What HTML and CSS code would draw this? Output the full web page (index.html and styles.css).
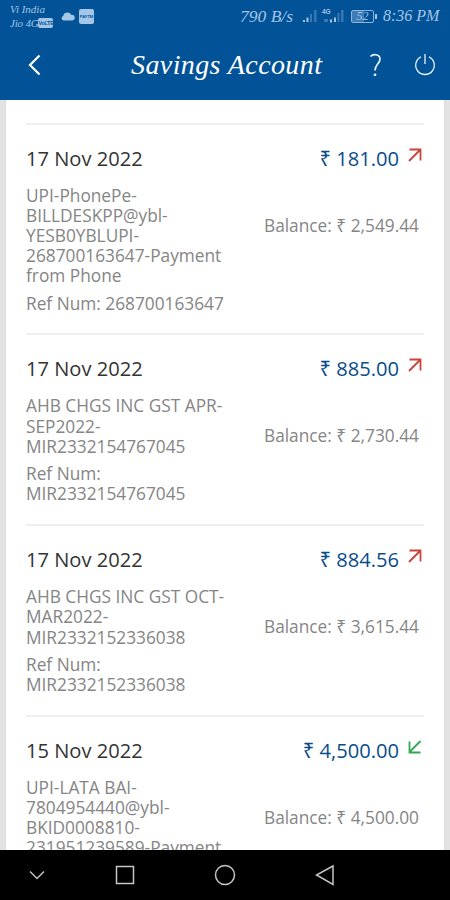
FILE: index.html
```html
<!DOCTYPE html>
<html lang="en">
<head>
<meta charset="utf-8">
<title>Savings Account</title>
<link rel="stylesheet" href="styles.css">
</head>
<body>
<div class="screen">
  <header class="top">
    <div class="status">
      <div class="carriers">
        <div class="carrier">Vi India</div>
        <div class="carrier second">Jio 4G<span class="volte">VoLTE</span></div>
      </div>
      <svg class="cloud" width="14" height="9" viewBox="0 0 14 9"><path d="M2.500 8.500A2.300 2.300 0 0 1 2.300 4A4.200 4.200 0 0 1 10.200 2.800A2.900 2.900 0 0 1 11.500 8.500Z"/></svg>
      <span class="paytm">PAYTM</span>
      <span class="speed">790 B/s</span>
      <svg class="signals" width="44" height="18" viewBox="0 0 44 18">
        <g class="on"><rect x="1" y="13" width="2" height="2"/><rect x="4.500" y="10.500" width="2" height="4.500"/><rect x="28" y="12.500" width="2" height="3"/><rect x="32" y="10.500" width="2" height="4.500"/></g>
        <g class="off"><rect x="8" y="7" width="2" height="8"/><rect x="12" y="3" width="2.500" height="12"/><rect x="22" y="12" width="4" height="3"/><rect x="35.500" y="6" width="2" height="9"/><rect x="39" y="3" width="2.500" height="12"/></g>
        <text x="20" y="7">4G</text>
      </svg>
      <span class="battery">52</span>
      <span class="clock">8:36 PM</span>
    </div>
    <div class="bar">
      <svg class="back" width="14" height="22" viewBox="0 0 14 22"><path d="M11.500 1.500L2 11L11.500 20.500"/></svg>
      <h1>Savings Account</h1>
      <svg class="help" width="14" height="24" viewBox="0 0 14 24"><path d="M1.500 3.500C4 .6 11 .8 11 6.300C11 10.500 6 11.500 6 17.500"/><circle cx="6" cy="21.800" r="1.400"/></svg>
      <svg class="power" width="22" height="24" viewBox="0 0 22 24"><path d="M11 1V11M7 3.800A9.300 9.300 0 1 0 15 3.800"/></svg>
    </div>
  </header>
  <main class="page">
    <section class="list">
      <article class="txn">
        <div class="head"><span class="date">17 Nov 2022</span><span class="amount">₹ 181.00</span><svg class="arrow debit" viewBox="0 0 14 14"><path d="M1 13L12.500 1.500M1.500 1.500H12.500V12.500"/></svg></div>
        <div class="body"><div class="details"><p>UPI-PhonePe-<br>BILLDESKPP@ybl-<br>YESB0YBLUPI-<br>268700163647-Payment<br>from Phone</p><p>Ref Num: 268700163647</p></div><div class="balance">Balance: <span class="sum">₹ 2,549.44</span></div></div>
      </article>
      <article class="txn">
        <div class="head"><span class="date">17 Nov 2022</span><span class="amount">₹ 885.00</span><svg class="arrow debit" viewBox="0 0 14 14"><path d="M1 13L12.500 1.500M1.500 1.500H12.500V12.500"/></svg></div>
        <div class="body"><div class="details"><p>AHB CHGS INC GST APR-<br>SEP2022-<br>MIR2332154767045</p><p>Ref Num:<br>MIR2332154767045</p></div><div class="balance">Balance: <span class="sum">₹ 2,730.44</span></div></div>
      </article>
      <article class="txn">
        <div class="head"><span class="date">17 Nov 2022</span><span class="amount">₹ 884.56</span><svg class="arrow debit" viewBox="0 0 14 14"><path d="M1 13L12.500 1.500M1.500 1.500H12.500V12.500"/></svg></div>
        <div class="body"><div class="details"><p>AHB CHGS INC GST OCT-<br>MAR2022-<br>MIR2332152336038</p><p>Ref Num:<br>MIR2332152336038</p></div><div class="balance">Balance: <span class="sum">₹ 3,615.44</span></div></div>
      </article>
      <article class="txn">
        <div class="head"><span class="date">15 Nov 2022</span><span class="amount">₹ 4,500.00</span><svg class="arrow credit" viewBox="0 0 14 14"><path d="M12.500 1L1.500 12M1.500 1.500V12.500H12.500"/></svg></div>
        <div class="body"><div class="details"><p>UPI-LATA BAI-<br>7804954440@ybl-<br>BKID0008810-<br>231951239589-Payment</p></div><div class="balance">Balance: <span class="sum">₹ 4,500.00</span></div></div>
      </article>
    </section>
  </main>
  <nav class="nav">
    <svg class="hide" width="50" height="24" viewBox="0 0 50 24"><path d="M18 8.500L25 15.500L32 8.500"/></svg>
    <svg width="50" height="24" viewBox="0 0 50 24"><rect x="16.500" y="3.500" width="17" height="17"/></svg>
    <svg width="50" height="24" viewBox="0 0 50 24"><circle cx="25" cy="12" r="9.500"/></svg>
    <svg width="50" height="24" viewBox="0 0 50 24"><path d="M33 3L16.500 12L33 21.500Z"/></svg>
  </nav>
</div>
</body>
</html>
```
FILE: styles.css
```css
* { box-sizing: border-box; }
body { margin: 0; }
p, h1 { margin: 0; }
svg { display: block; flex: none; }
.screen {
  width: 450px;
  height: 900px;
  display: flex;
  flex-direction: column;
  overflow: hidden;
  font-family: "Open Sans", "Noto Sans", sans-serif;
}
.top {
  height: 100px;
  flex: none;
  background: #015296;
  color: #fff;
}
.status {
  height: 32px;
  display: flex;
  align-items: center;
  padding: 0 11px 0 10px;
  color: #a3c5e8;
  font-family: "Liberation Serif", serif;
  font-style: italic;
  white-space: nowrap;
}
.carriers { width: 45px; flex: none; font-size: 11px; line-height: 14px; }
.second { display: flex; align-items: center; letter-spacing: -0.2px; }
.volte {
  background: #a3c5e8;
  color: #015296;
  border-radius: 2px;
  font: bold 5.5px/10px "Liberation Sans", sans-serif;
  width: 15px;
  flex: none;
  text-align: center;
  letter-spacing: -0.3px;
}
.cloud { margin-left: 6px; fill: #a3c5e8; }
.paytm {
  margin-left: 4px;
  width: 15px;
  flex: none;
  background: #a3c5e8;
  color: #015296;
  border-radius: 2px;
  text-align: center;
  font: bold 4px/15px "Liberation Sans", sans-serif;
}
.speed { margin-left: auto; width: 62px; flex: none; font-size: 17.500px; }
.signals { width: 44px; }
.on { fill: #a3c5e8; }
.off { fill: #3979b3; }
.signals text { fill: #a3c5e8; font: bold 6.5px "Liberation Sans", sans-serif; }
.battery {
  margin-left: 5px;
  width: 23px;
  flex: none;
  height: 13px;
  border: 1px solid #8cb4da;
  border-radius: 2px;
  background: linear-gradient(90deg, #3f7db6 55%, #015296 55%);
  font: italic 12px/11px "Liberation Serif", serif;
  text-align: center;
  position: relative;
}
.battery::after {
  content: "";
  position: absolute;
  right: -4px;
  top: 3px;
  width: 2px;
  height: 5px;
  background: #a3c5e8;
}
.clock { margin-left: 9px; width: 56px; flex: none; font-size: 16px; }
.bar {
  height: 66px;
  display: flex;
  align-items: center;
  padding: 0 14px 0 28px;
}
.bar svg { fill: none; stroke: #e6f5ff; }
.bar .back { stroke: #fff; stroke-width: 2.200; }
h1 {
  margin-left: 89px;
  width: 238px;
  font: italic 28px/40px "Liberation Serif", serif;
  letter-spacing: 0.400px;
  white-space: nowrap;
}
.help { stroke-width: 1.700; }
.bar .help circle { fill: #e6f5ff; stroke: none; }
.power { margin-left: auto; stroke-width: 1.300; }
.page {
  height: 750px;
  flex: none;
  overflow: hidden;
  background: #e3e3e3;
  padding: 0 6px;
}
.list { background: #fff; padding: 22.500px 20px 0; box-shadow: 0 0 2px #d4d4d4; }
.txn { border-top: 2px solid #efefef; padding-bottom: 19.700px; }
.head {
  height: 61px;
  padding: 20px 0 13px;
  display: flex;
  align-items: flex-start;
  font-size: 20.100px;
  line-height: 27px;
}
.date { color: #333; flex: 1; }
.amount { color: #084c8b; }
.arrow { width: 14px; height: 14px; margin: 3px 2px 0 9px; fill: none; stroke-width: 1.800; }
.debit { stroke: #c9443b; }
.credit { stroke: #32a852; }
.body {
  display: flex;
  justify-content: space-between;
  color: #858585;
  font-size: 17.300px;
  line-height: 20.200px;
  white-space: nowrap;
}
.details p + p { margin-top: 7px; }
.balance { padding: 30px 5px 0 0; }
.nav {
  height: 50px;
  flex: none;
  background: #000;
  display: flex;
  align-items: center;
  gap: 50px;
  padding-left: 12px;
}
.nav svg { fill: none; stroke: #c5c5c5; stroke-width: 1.500; }
.nav .hide { margin-right: -12px; }
```
